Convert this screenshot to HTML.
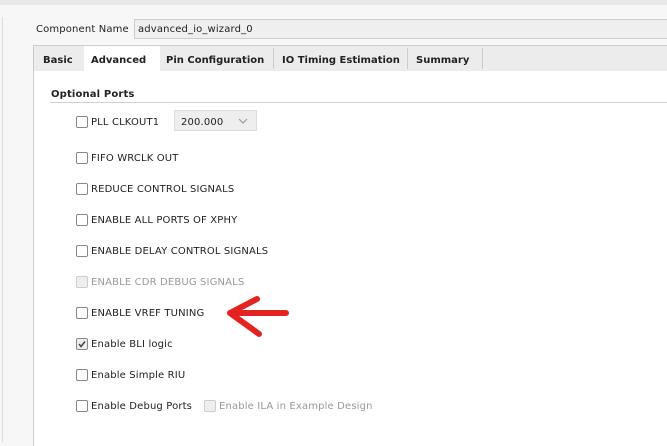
<!DOCTYPE html>
<html><head><style>
body{margin:0;width:667px;height:442px;overflow:hidden;background:#f7f7f7;font-family:"DejaVu Sans","Liberation Sans",sans-serif;font-size:10px;color:#222;position:relative}
.a{position:absolute}
.cb{position:absolute;width:10px;height:10px;border:1px solid #888;border-radius:2px;background:#fff;margin-top:1px}
.lb{position:absolute;white-space:nowrap;margin-top:2px;letter-spacing:0.15px}
.tab{position:absolute;top:49px;height:24px;line-height:24px;font-weight:bold;font-size:10px}
</style></head><body>
<div class="a" style="left:0;top:0;width:667px;height:5px;background:#e8e8e8"></div>
<div class="a" style="left:2px;top:17px;width:1px;height:425px;background:#ddd"></div>
<div class="lb" style="left:36px;top:22px">Component Name</div>
<div class="a" style="left:134px;top:19px;width:540px;height:18px;background:#efefef;border:1px solid #ccc"></div>
<div class="lb" style="left:138px;top:22px">advanced_io_wizard_0</div>
<div class="a" style="left:33px;top:45px;width:640px;height:400px;background:#fff;border-left:1px solid #ccc;border-top:1px solid #ccc"></div>
<div class="a" style="left:34px;top:46px;width:633px;height:25px;background:#ececec"></div>
<div class="a" style="left:84px;top:46px;width:76px;height:26px;background:#fff"></div>
<div class="tab" style="left:43px">Basic</div>
<div class="tab" style="left:91px">Advanced</div>
<div class="tab" style="left:166px">Pin Configuration</div>
<div class="a" style="left:273px;top:48px;width:1px;height:21px;background:#ccc"></div>
<div class="tab" style="left:282px">IO Timing Estimation</div>
<div class="a" style="left:407px;top:48px;width:1px;height:21px;background:#ccc"></div>
<div class="tab" style="left:416px">Summary</div>
<div class="a" style="left:482px;top:48px;width:1px;height:21px;background:#ccc"></div>
<div class="lb" style="left:51px;top:87px;font-weight:bold">Optional Ports</div>
<div class="a" style="left:50px;top:102px;width:617px;height:1px;background:#d0d0d0"></div>
<div class="a" style="left:174px;top:110px;width:83px;height:21px;background:#eee;border:1px solid #ddd;box-sizing:border-box"></div>
<div class="lb" style="left:181px;top:115px">200.000</div>
<svg class="a" style="left:238px;top:117px" width="10" height="8"><path d="M1 2 L5 6 L9 2" fill="none" stroke="#999" stroke-width="1.2"/></svg>

<div class="cb" style="left:76px;top:115px"></div><div class="lb" style="left:91px;top:115px">PLL CLKOUT1</div>
<div class="cb" style="left:76px;top:151px"></div><div class="lb" style="left:91px;top:151px">FIFO WRCLK OUT</div>
<div class="cb" style="left:76px;top:182px"></div><div class="lb" style="left:91px;top:182px">REDUCE CONTROL SIGNALS</div>
<div class="cb" style="left:76px;top:213px"></div><div class="lb" style="left:91px;top:213px">ENABLE ALL PORTS OF XPHY</div>
<div class="cb" style="left:76px;top:244px"></div><div class="lb" style="left:91px;top:244px">ENABLE DELAY CONTROL SIGNALS</div>
<div class="cb" style="left:76px;top:275px;border-color:#ccc;background:#eee"></div><div class="lb" style="left:91px;top:275px;color:#999">ENABLE CDR DEBUG SIGNALS</div>
<div class="cb" style="left:76px;top:306px"></div><div class="lb" style="left:91px;top:306px">ENABLE VREF TUNING</div>
<div class="cb" style="left:76px;top:337px;background:#eee"></div>
<svg class="a" style="left:77px;top:339px" width="10" height="10"><path d="M2 5 L4 7.5 L8 2.5" fill="none" stroke="#444" stroke-width="1.5"/></svg>
<div class="lb" style="left:91px;top:337px">Enable BLI logic</div>
<div class="cb" style="left:76px;top:368px"></div><div class="lb" style="left:91px;top:368px">Enable Simple RIU</div>
<div class="cb" style="left:76px;top:399px"></div><div class="lb" style="left:91px;top:399px">Enable Debug Ports</div>
<div class="cb" style="left:204px;top:399px;border-color:#ccc;background:#eee"></div><div class="lb" style="left:219px;top:399px;color:#999">Enable ILA in Example Design</div>

<svg class="a" style="left:0;top:0" width="667" height="442"><path d="M286 313 L230 313 M230 313 L257 299 M230 313 L259 334" fill="none" stroke="#e52222" stroke-width="6" stroke-linecap="round" stroke-linejoin="round"/></svg>
</body></html>
